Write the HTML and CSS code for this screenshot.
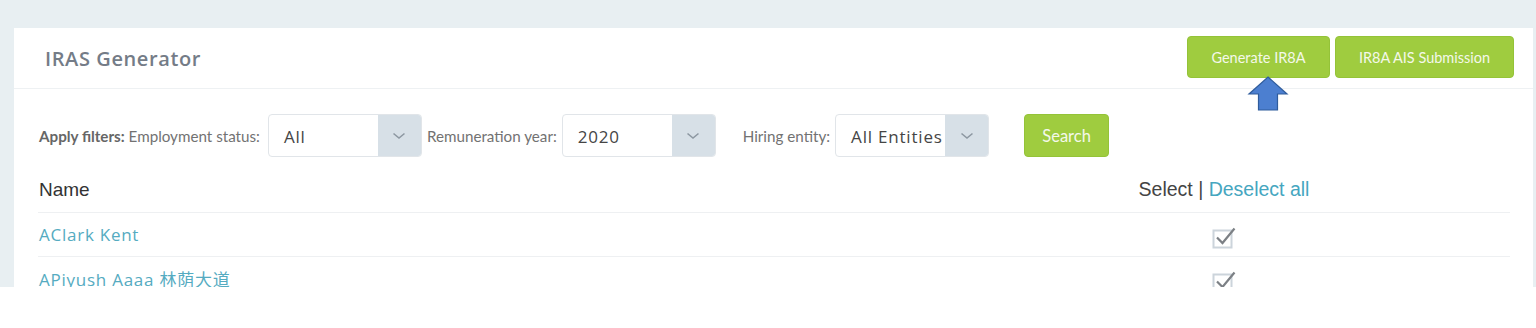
FILE: index.html
```html
<!DOCTYPE html>
<html lang="en">
<head>
<meta charset="utf-8">
<title>IRAS Generator</title>
<link rel="stylesheet" href="styles.css">
</head>
<body>
<div class="page">
  <div class="card">
    <div class="card-header">
      <h1 class="title">IRAS Generator</h1>
      <div class="actions">
        <button class="btn btn-action btn-generate">Generate IR8A
          <svg class="pointer" width="42" height="35" viewBox="0 0 42 35" aria-hidden="true">
            <path d="M21 1 L40 18 L30.5 18 L30.5 34 L11.5 34 L11.5 18 L2 18 Z" fill="#4c7fd0" stroke="#2f5c9c" stroke-width="1.2" stroke-linejoin="miter"/>
          </svg>
        </button>
        <button class="btn btn-action">IR8A AIS Submission</button>
      </div>
    </div>

    <div class="filters">
      <span class="label label-first"><b>Apply filters:</b> Employment status:</span>
      <div class="select"><span class="select-value">All</span><span class="select-arrow"><svg width="14" height="8" viewBox="0 0 14 8"><path d="M1.5 1.5 L7 6 L12.5 1.5" fill="none" stroke="#8d98a2" stroke-width="1.6"/></svg></span></div>
      <span class="label">Remuneration year:</span>
      <div class="select"><span class="select-value">2020</span><span class="select-arrow"><svg width="14" height="8" viewBox="0 0 14 8"><path d="M1.5 1.5 L7 6 L12.5 1.5" fill="none" stroke="#8d98a2" stroke-width="1.6"/></svg></span></div>
      <span class="label label-wide">Hiring entity:</span>
      <div class="select"><span class="select-value">All Entities</span><span class="select-arrow"><svg width="14" height="8" viewBox="0 0 14 8"><path d="M1.5 1.5 L7 6 L12.5 1.5" fill="none" stroke="#8d98a2" stroke-width="1.6"/></svg></span></div>
      <button class="btn btn-search">Search</button>
    </div>

    <div class="list">
      <div class="row head">
        <div class="cell name-head">Name</div>
        <div class="cell sel">Select | <a class="link" href="#">Deselect all</a></div>
        <div class="cell"></div>
      </div>
      <div class="row">
        <div class="cell"><a class="link name" href="#">AClark Kent</a></div>
        <div class="cell sel"><svg class="check" width="25" height="24" viewBox="0 0 25 24"><rect x="1.5" y="5.5" width="18" height="17" fill="none" stroke="#ccd4db" stroke-width="2"/><path d="M5 12.5 L10.5 18 L22.5 3.5" fill="none" stroke="#7c8085" stroke-width="2.2"/></svg></div>
        <div class="cell"></div>
      </div>
      <div class="row">
        <div class="cell"><a class="link name" href="#">APiyush Aaaa 林荫大道</a></div>
        <div class="cell sel"><svg class="check" width="25" height="24" viewBox="0 0 25 24"><rect x="1.5" y="5.5" width="18" height="17" fill="none" stroke="#ccd4db" stroke-width="2"/><path d="M5 12.5 L10.5 18 L22.5 3.5" fill="none" stroke="#7c8085" stroke-width="2.2"/></svg></div>
        <div class="cell"></div>
      </div>
    </div>
  </div>
</div>
</body>
</html>
```

FILE: styles.css
```css
* { box-sizing: border-box; }
html, body { margin: 0; padding: 0; background: #ffffff; }
.page {
  height: 287px;
  overflow: hidden;
  background: #e8eff2;
  padding: 28px 3px 0 14px;
}
.card {
  background: #ffffff;
  height: 100%;
}
.card-header {
  height: 61px;
  display: flex;
  align-items: center;
  justify-content: space-between;
  padding: 0 19px 0 31px;
  border-bottom: 1px solid #eef1f3;
}
.title {
  margin: 0;
  font-family: "Open Sans", sans-serif;
  font-weight: 600;
  font-size: 20px;
  color: #747c87;
  letter-spacing: 0.6px;
}
.actions { display: flex; gap: 5px; margin-top: -2px; }
.btn {
  font-family: Lato, "Liberation Sans", sans-serif;
  color: #f4f8ea;
  background: #9fcc3f;
  border: 1px solid #94c338;
  border-radius: 4px;
  cursor: pointer;
  padding: 0;
}
.btn-action {
  position: relative;
  height: 42px;
  font-size: 14.5px;
  padding: 0 20px;
}
.btn-generate { width: 143px; }
.btn-action:not(.btn-generate) { width: 179px; }
.pointer {
  position: absolute;
  left: 59px;
  top: 39px;
}
.filters {
  display: flex;
  align-items: center;
  padding: 25px 0 0 25px;
  height: 68px;
}
.label {
  font-family: Lato, "Liberation Sans", sans-serif;
  font-size: 15.2px;
  color: #727272;
  margin-right: 5px;
  white-space: nowrap;
}
.label-first { margin-right: 8px; }
.label b { color: #666; }
.label-wide { margin-left: 22px; }
.select {
  display: flex;
  width: 154px;
  height: 43px;
  border: 1px solid #e1e5e9;
  border-radius: 4px;
  overflow: hidden;
  margin-right: 5px;
}
.select-value {
  flex: 1;
  min-width: 0;
  overflow: hidden;
  white-space: nowrap;
  padding: 0 0 0 15px;
  display: flex;
  align-items: center;
  font-family: "Open Sans", sans-serif;
  font-size: 17px;
  letter-spacing: 0.8px;
  color: #454545;
  padding-top: 2px;
}
.select-arrow {
  flex: none;
  width: 43px;
  background: #d7e0e7;
  display: flex;
  align-items: center;
  justify-content: center;
}
.btn-search {
  margin-left: 30px;
  width: 85px;
  height: 43px;
  font-size: 16.5px;
}
.list {
  margin: 0 23px 0 24px;
}
.row {
  display: grid;
  grid-template-columns: 1fr 174px 199px;
  border-bottom: 1px solid #eef0f2;
  height: 44px;
  align-items: center;
}
.row.head { height: 56px; padding-top: 10px; }
.cell { font-family: "Liberation Sans", Arial, sans-serif; }
.name-head { font-size: 19px; color: #333; padding-left: 1px; }
.sel { text-align: center; font-size: 19.5px; color: #444; }
.link { color: #45a6bf; text-decoration: none; }
.name {
  font-family: "Open Sans", "Noto Sans CJK SC", sans-serif;
  font-size: 17px;
  letter-spacing: 0.75px;
  color: #55abc1;
  padding-left: 1px;
}
.check { display: block; margin: 4px auto 0; }
```
